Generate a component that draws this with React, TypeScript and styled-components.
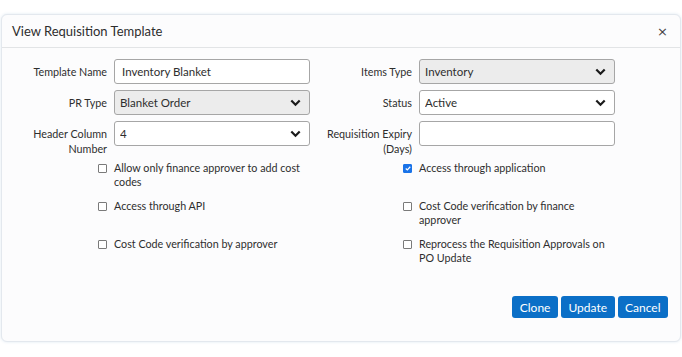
import React from "react";
import styled, { createGlobalStyle } from "styled-components";

const GlobalStyle = createGlobalStyle`
  html, body {
    margin: 0;
    padding: 0;
    background: #ffffff;
  }
  body {
    font-family: Lato, "Open Sans", sans-serif;
    color: #333333;
  }
`;

const Page = styled.div`
  width: 682px;
  height: 357px;
  padding: 14px 1px 0 1px;
  box-sizing: border-box;
`;

const Dialog = styled.div`
  height: 328px;
  background: #fcfcfd;
  border: 1px solid #e3e8ee;
  border-radius: 6px;
  box-shadow: 0 0 3px rgba(80, 130, 180, 0.18);
  display: flex;
  flex-direction: column;
  box-sizing: border-box;
`;

const Header = styled.div`
  height: 32px;
  display: flex;
  align-items: center;
  justify-content: space-between;
  padding: 0 12px 0 10px;
  border-bottom: 1px solid #e2e4e6;
  flex-shrink: 0;
`;

const Title = styled.h1`
  margin: 0;
  font-size: 13px;
  font-weight: 400;
  color: #2e2e2e;
`;

const CloseButton = styled.button`
  border: none;
  background: none;
  padding: 0;
  font-size: 13px;
  line-height: 1;
  color: #444444;
  cursor: pointer;
  font-family: "DejaVu Sans", sans-serif;
`;

const Body = styled.div`
  flex: 1;
  padding: 11px 12px 0 10px;
  display: flex;
  flex-direction: column;
`;

const FormGrid = styled.div`
  display: grid;
  grid-template-columns: 95px 196px 95px 196px;
  grid-auto-rows: 25px;
  column-gap: 7px;
  row-gap: 6px;
`;

const Label = styled.label`
  font-size: 10.75px;
  line-height: 15px;
  color: #2e2e2e;
  text-align: right;
  padding-top: 5px;
  white-space: nowrap;
`;

const Field = styled.div`
  position: relative;
`;

const TextInput = styled.input`
  width: 100%;
  height: 25px;
  box-sizing: border-box;
  border: 1px solid #a6a6a6;
  border-radius: 3px;
  background: #ffffff;
  padding: 0 7px;
  font-family: inherit;
  font-size: 11.5px;
  color: #2e2e2e;
  outline: none;
`;

const Select = styled.select<{ $disabled?: boolean }>`
  width: 100%;
  height: 25px;
  box-sizing: border-box;
  border: 1px solid #a6a6a6;
  border-radius: 3px;
  background: ${(p) => (p.$disabled ? "#ececec" : "#ffffff")};
  padding: 0 24px 0 5px;
  font-family: inherit;
  font-size: 11.5px;
  color: #2e2e2e;
  appearance: none;
  -webkit-appearance: none;
  outline: none;
`;

const Chevron = styled.svg`
  position: absolute;
  right: 9px;
  top: 9px;
  width: 11px;
  height: 8px;
  pointer-events: none;
`;

const CheckGrid = styled.div`
  display: grid;
  grid-template-columns: 305px 220px;
  grid-template-rows: repeat(3, 38px);
  margin: 15px 0 0 86px;
`;

const CheckItem = styled.label`
  display: flex;
  align-items: flex-start;
  gap: 7px;
  font-size: 10.75px;
  line-height: 14px;
  color: #2e2e2e;
`;

const Box = styled.span<{ $checked?: boolean }>`
  width: 7px;
  height: 7px;
  margin-top: 3px;
  flex-shrink: 0;
  border: 1px solid ${(p) => (p.$checked ? "#1a73e8" : "#7a7a7a")};
  background: ${(p) => (p.$checked ? "#1a73e8" : "#ffffff")};
  border-radius: 1px;
  display: flex;
  align-items: center;
  justify-content: center;
`;

const CheckText = styled.span`
  width: 194px;
  flex-shrink: 0;
`;

const Footer = styled.div`
  margin-top: auto;
  display: flex;
  justify-content: flex-end;
  gap: 3px;
  padding: 0 0 23px 0;
`;

const Button = styled.button`
  height: 22px;
  padding: 0 7.5px;
  border: none;
  border-radius: 3px;
  background: #0b6fc7;
  color: #ffffff;
  font-family: inherit;
  font-size: 12px;
  cursor: pointer;
`;

function Caret() {
  return (
    <Chevron viewBox="0 0 11 8">
      <path d="M1.3 1.5 L5.5 5.7 L9.7 1.5" fill="none" stroke="#1a1a1a" strokeWidth="2.2" />
    </Chevron>
  );
}

function Check({ label, checked }: { label: string; checked?: boolean }) {
  return (
    <CheckItem>
      <Box $checked={checked}>
        {checked && (
          <svg width="6" height="5" viewBox="0 0 7 6">
            <path d="M0.8 3 L2.7 4.8 L6.2 0.9" fill="none" stroke="#fff" strokeWidth="1.4" />
          </svg>
        )}
      </Box>
      <CheckText>{label}</CheckText>
    </CheckItem>
  );
}

export default function App() {
  return (
    <>
      <GlobalStyle />
      <Page>
        <Dialog>
          <Header>
            <Title>View Requisition Template</Title>
            <CloseButton type="button">×</CloseButton>
          </Header>
          <Body>
            <FormGrid>
              <Label>Template Name</Label>
              <Field>
                <TextInput defaultValue="Inventory Blanket" />
              </Field>
              <Label>Items Type</Label>
              <Field>
                <Select $disabled defaultValue="Inventory">
                  <option>Inventory</option>
                </Select>
                <Caret />
              </Field>

              <Label>PR Type</Label>
              <Field>
                <Select $disabled defaultValue="Blanket Order">
                  <option>Blanket Order</option>
                </Select>
                <Caret />
              </Field>
              <Label>Status</Label>
              <Field>
                <Select defaultValue="Active">
                  <option>Active</option>
                  <option>Inactive</option>
                </Select>
                <Caret />
              </Field>

              <Label>
                Header Column
                <br />
                Number
              </Label>
              <Field>
                <Select defaultValue="4">
                  <option>4</option>
                </Select>
                <Caret />
              </Field>
              <Label>
                Requisition Expiry
                <br />
                (Days)
              </Label>
              <Field>
                <TextInput defaultValue="" />
              </Field>
            </FormGrid>

            <CheckGrid>
              <Check label="Allow only finance approver to add cost codes" />
              <Check label="Access through application" checked />
              <Check label="Access through API" />
              <Check label="Cost Code verification by finance approver" />
              <Check label="Cost Code verification by approver" />
              <Check label="Reprocess the Requisition Approvals on PO Update" />
            </CheckGrid>

            <Footer>
              <Button type="button">Clone</Button>
              <Button type="button">Update</Button>
              <Button type="button">Cancel</Button>
            </Footer>
          </Body>
        </Dialog>
      </Page>
    </>
  );
}
